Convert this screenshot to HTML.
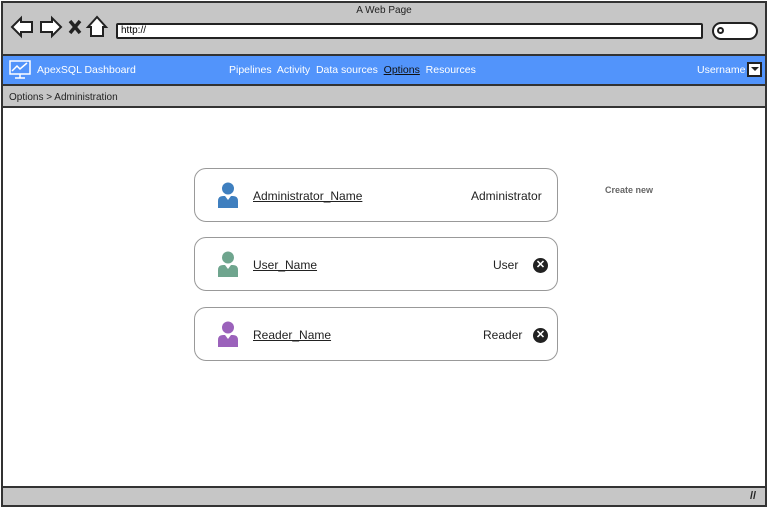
<!DOCTYPE html>
<html><head><style>
*{margin:0;padding:0;box-sizing:border-box}
body{width:768px;height:508px;background:#fff;font-family:"Liberation Sans",sans-serif;position:relative;overflow:hidden}
.frame{position:absolute;left:1px;top:1px;width:766px;height:506px;border:2px solid #333;background:#fff}
.abs{position:absolute}
.card{position:absolute;left:194px;width:364px;height:54px;border:1.5px solid #999;border-radius:12px;background:#fff}
.name{position:absolute;left:58px;top:20px;font-size:12px;color:#222;text-decoration:underline}
.role{position:absolute;top:20px;font-size:12px;color:#222}
.x{position:absolute;left:338px;top:20px;width:15px;height:15px;border-radius:50%;background:#222;color:#fff;font-size:11px;font-weight:bold;text-align:center;line-height:15px}
</style></head><body>
<div class="frame"></div>
<div class="abs" style="left:3px;top:3px;width:762px;height:51px;background:#c6c6c6"></div>
<div class="abs" style="left:0;top:5px;width:768px;text-align:center;font-size:10px;color:#222">A Web Page</div>
<svg class="abs" style="left:10px;top:15px" width="100" height="26" viewBox="0 0 100 26">
<path d="M2 12 L11 3 L11 7 L22 7 L22 17 L11 17 L11 21 Z" fill="#fff" stroke="#222" stroke-width="2"/>
<path d="M51 12 L42 3 L42 7 L31 7 L31 17 L42 17 L42 21 Z" fill="#fff" stroke="#222" stroke-width="2"/>
<path d="M60 6 L70 18 M70 6 L60 18" stroke="#222" stroke-width="3.5"/>
<path d="M87 2 L78 12 L81 12 L81 21 L93 21 L93 12 L96 12 Z" fill="#fff" stroke="#222" stroke-width="2"/>
</svg>
<div class="abs" style="left:116px;top:23px;width:587px;height:16px;background:#fff;border:2px solid #222;border-radius:2px;font-size:10px;padding-left:3px;line-height:12px">http://</div>
<div class="abs" style="left:712px;top:22px;width:46px;height:18px;background:#fff;border:2px solid #222;border-radius:9px"></div>
<div class="abs" style="left:717px;top:27px;width:7px;height:7px;border:2px solid #222;border-radius:50%"></div>
<div class="abs" style="left:3px;top:54px;width:762px;height:2px;background:#333"></div>
<div class="abs" style="left:3px;top:56px;width:762px;height:28px;background:#5294fb"></div>
<svg class="abs" style="left:9px;top:60px" width="22" height="20" viewBox="0 0 22 20"><rect x="1" y="1" width="20" height="13" fill="none" stroke="#fff" stroke-width="1.5"/><path d="M3 11 L8 6 L11 9 L18 3 M11 14 L11 18 M6 18 L16 18" stroke="#fff" stroke-width="1.5" fill="none"/></svg>
<div class="abs" style="left:37px;top:64px;font-size:10.5px;color:#fff">ApexSQL Dashboard</div>
<div class="abs" style="left:229px;top:64px;font-size:10.5px;color:#fff">Pipelines&nbsp; Activity&nbsp; Data sources&nbsp; <span style="color:#111;text-decoration:underline">Options</span>&nbsp; Resources</div>
<div class="abs" style="left:697px;top:64px;font-size:10.5px;color:#fff">Username</div>
<div class="abs" style="left:747px;top:62px;width:15px;height:15px;background:#fff;border:2px solid #222"></div>
<div class="abs" style="left:751px;top:67px;width:0;height:0;border-left:4px solid transparent;border-right:4px solid transparent;border-top:4px solid #222"></div>
<div class="abs" style="left:3px;top:84px;width:762px;height:2px;background:#333"></div>
<div class="abs" style="left:3px;top:86px;width:762px;height:22px;background:#c6c6c6;border-bottom:2px solid #333"></div>
<div class="abs" style="left:9px;top:92px;font-size:10px;color:#222">Options &gt; Administration</div>
<div class="abs" style="left:3px;top:486px;width:762px;height:19px;background:#c6c6c6;border-top:2px solid #333"></div>
<div class="abs" style="left:750px;top:490px;font-size:11px;color:#222;font-weight:bold">//</div>
<div class="abs" style="left:605px;top:185px;font-size:9px;color:#666;font-weight:bold">Create new</div>

<div class="card" style="top:168px">
<svg class="abs" style="left:22px;top:13px" width="22" height="26" viewBox="0 0 22 26"><circle cx="11" cy="6.5" r="6" fill="#3f7fbf"/><path d="M1 26 L1 19 Q1 14 6 14 L16 14 Q21 14 21 19 L21 26 Z" fill="#3f7fbf"/><path d="M8 14 L11 18 L14 14" fill="#fff"/></svg>
<div class="name">Administrator_Name</div><div class="role" style="left:276px">Administrator</div></div>
<div class="card" style="top:237px">
<svg class="abs" style="left:22px;top:13px" width="22" height="26" viewBox="0 0 22 26"><circle cx="11" cy="6.5" r="6" fill="#6fa58e"/><path d="M1 26 L1 19 Q1 14 6 14 L16 14 Q21 14 21 19 L21 26 Z" fill="#6fa58e"/><path d="M8 14 L11 18 L14 14" fill="#fff"/></svg>
<div class="name">User_Name</div><div class="role" style="left:298px">User</div><div class="x">✕</div></div>
<div class="card" style="top:307px">
<svg class="abs" style="left:22px;top:13px" width="22" height="26" viewBox="0 0 22 26"><circle cx="11" cy="6.5" r="6" fill="#9b62bb"/><path d="M1 26 L1 19 Q1 14 6 14 L16 14 Q21 14 21 19 L21 26 Z" fill="#9b62bb"/><path d="M8 14 L11 18 L14 14" fill="#fff"/></svg>
<div class="name">Reader_Name</div><div class="role" style="left:288px">Reader</div><div class="x">✕</div></div>
</body></html>
